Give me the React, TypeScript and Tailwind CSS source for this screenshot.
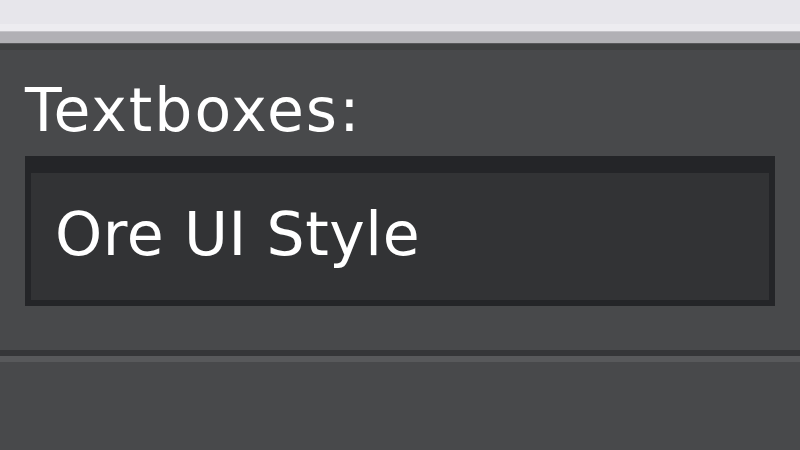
import React from "react";

export default function App() {
  const font = { fontFamily: '"DejaVu Sans", "Liberation Sans", sans-serif' };
  return (
    <div className="w-[800px] h-[450px] overflow-hidden flex flex-col bg-[#48494b]" style={font}>
      <div className="h-[24px] bg-[#e7e6eb]" />
      <div className="h-[7px] bg-[#edecf0]" />
      <div className="h-[12px] bg-[#b1b0b5] border-t border-[#c4c3c8]" />
      <div className="h-[1px] bg-[#58585b]" />
      <div className="h-[6px] bg-[#3f4042]" />
      <div className="h-[300px] bg-[#48494b] flex flex-col px-[25px]">
        <div className="mt-[30px] text-[60px] leading-none tracking-[2px] text-white h-[60px] whitespace-nowrap">
          Textboxes:
        </div>
        <div className="mt-[16px] h-[150px] w-[750px] bg-[#242528] flex flex-col pt-[17px] px-[6px] pb-[6px]">
          <div className="flex-1 bg-[#323335] pl-[24px] pt-[31px]">
            <div className="text-[60px] leading-none tracking-[0.6px] text-white h-[60px] whitespace-nowrap">
              Ore UI Style
            </div>
          </div>
        </div>
      </div>
      <div className="h-[6px] bg-[#353638]" />
      <div className="h-[6px] bg-[#58595b]" />
      <div className="flex-1 bg-[#48494b]" />
    </div>
  );
}
